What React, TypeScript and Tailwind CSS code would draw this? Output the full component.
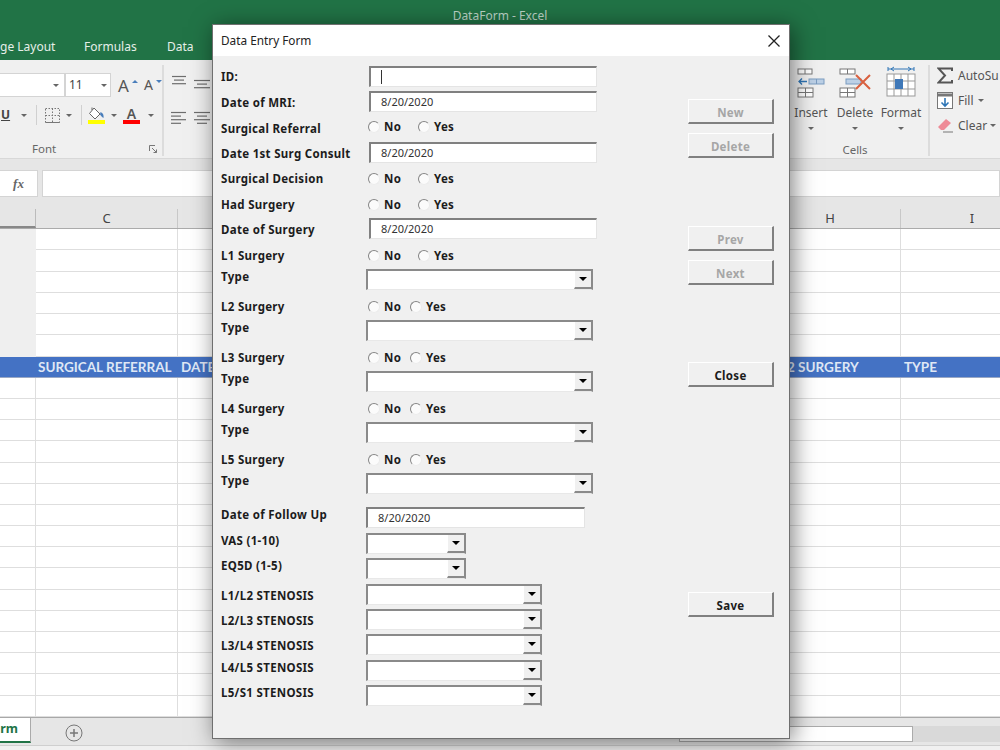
import React from 'react';

const FORM_FONT = "font-['Noto_Sans','DejaVu_Sans',sans-serif]";

const Arrow = ({ className = '' }: { className?: string }) => (
    <span className={`inline-block w-0 h-0 border-x-[3px] border-x-transparent border-t-[3px] border-t-[#666] ${className}`} />
);

const Label = ({ children, className = '' }: { children: React.ReactNode; className?: string }) => (
    <div className={`w-[145px] shrink-0 h-[15px] pt-[1px] leading-[14px] text-[11.5px] tracking-[0.3px] font-bold text-[#1c1c1c] whitespace-nowrap ${className}`}>{children}</div>
);

const DateField = ({ value, className = '' }: { value?: string; className?: string }) => (
    <div className={`h-[21px] bg-white border-t-2 border-l-2 border-[#808080] border-r border-b border-r-[#e4e4e4] border-b-[#e4e4e4] flex items-center pl-[10px] text-[11px] text-[#333] ${className}`}>
        {value ?? <span className="w-px h-[14px] bg-[#333]" />}
    </div>
);

const Combo = ({ className = '' }: { className?: string }) => (
    <div className={`h-[21px] bg-white border-t-2 border-l-2 border-[#8a8a8a] border-r-2 border-b border-b-[#e8e8e8] flex justify-end ${className}`}>
        <div className="w-[17px] h-[18px] bg-[#f0f0f0] border-l border-l-white border-b-2 border-b-[#8a8a8a] flex items-center justify-center">
            <span className="w-0 h-0 border-x-[4px] border-x-transparent border-t-[4px] border-t-black" />
        </div>
    </div>
);

const Radio = ({ text, className = '' }: { text: string; className?: string }) => (
    <div className={`flex items-center h-[14px] gap-[4px] text-[11.5px] tracking-[0.3px] font-bold text-[#1c1c1c] ${className}`}>
        <span className="w-[12px] h-[12px] rounded-full bg-[#fbfbfb] border border-t-[#868686] border-l-[#868686] border-r-[#ececec] border-b-[#ececec]" />
        {text}
    </div>
);

const Radios = ({ narrow, className = '' }: { narrow?: boolean; className?: string }) => (
    <div className={`flex ml-[2px] ${className}`}>
        <Radio text="No" className={narrow ? 'w-[42px]' : 'w-[50px]'} />
        <Radio text="Yes" />
    </div>
);

const FormButton = ({ text, disabled, className = '' }: { text: string; disabled?: boolean; className?: string }) => (
    <div className={`w-[86px] h-[25px] pt-[3px] bg-[#f0f0f0] border-t border-l border-white border-r-2 border-b-2 border-r-[#808080] border-b-[#808080] flex items-center justify-center text-[11.5px] tracking-[0.3px] font-bold ${disabled ? 'text-[#a6a6a6]' : 'text-[#1c1c1c]'} ${className}`}>
        {text}
    </div>
);

function Dialog() {
    return (
        <div className={`absolute left-[212px] top-[24px] w-[578px] h-[715px] bg-[#f0f0f0] border border-[#6f6f6f] shadow-[3px_3px_22px_rgba(0,0,0,0.5)] ${FORM_FONT}`}>
            <div className="h-[31px] bg-white flex items-center justify-between pl-[8px] pr-[9px]">
                <span className="text-[11.8px] text-[#222]">Data Entry Form</span>
                <svg width="12" height="12" viewBox="0 0 12 12" className="stroke-[#222]">
                    <path d="M0.5 0.5L11.5 11.5M11.5 0.5L0.5 11.5" strokeWidth="1.3" />
                </svg>
            </div>
            <div className="flex pl-[8px]">
                <div className="w-[467px] pt-[10px]">
                    <div className="flex h-[25px]"><Label className="mt-[3px]">ID:</Label><DateField className="ml-[3px] w-[228px]" /></div>
                    <div className="flex h-[26px]"><Label className="mt-[4px]">Date of MRI:</Label><DateField value="8/20/2020" className="ml-[3px] w-[228px]" /></div>
                    <div className="flex h-[25px]"><Label className="mt-[4px]">Surgical Referral</Label><Radios className="mt-[3px]" /></div>
                    <div className="flex h-[26px]"><Label className="mt-[4px]">Date 1st Surg Consult</Label><DateField value="8/20/2020" className="ml-[3px] w-[228px]" /></div>
                    <div className="flex h-[25px]"><Label className="mt-[3px]">Surgical Decision</Label><Radios className="mt-[4px]" /></div>
                    <div className="flex h-[25px]"><Label className="mt-[4px]">Had Surgery</Label><Radios className="mt-[5px]" /></div>
                    <div className="flex h-[26px]"><Label className="mt-[4px]">Date of Surgery</Label><DateField value="8/20/2020" className="ml-[3px] w-[228px]" /></div>
                    <div className="flex h-[25px]"><Label className="mt-[4px]">L1 Surgery</Label><Radios className="mt-[5px]" /></div>
                    <div className="flex h-[26px]"><Label>Type</Label><Combo className="w-[227px]" /></div>
                    <div className="flex h-[25px]"><Label className="mt-[4px]">L2 Surgery</Label><Radios narrow className="mt-[5px]" /></div>
                    <div className="flex h-[26px]"><Label>Type</Label><Combo className="w-[227px]" /></div>
                    <div className="flex h-[25px]"><Label className="mt-[4px]">L3 Surgery</Label><Radios narrow className="mt-[5px]" /></div>
                    <div className="flex h-[26px]"><Label>Type</Label><Combo className="w-[227px]" /></div>
                    <div className="flex h-[25px]"><Label className="mt-[4px]">L4 Surgery</Label><Radios narrow className="mt-[5px]" /></div>
                    <div className="flex h-[26px]"><Label>Type</Label><Combo className="w-[227px]" /></div>
                    <div className="flex h-[25px]"><Label className="mt-[4px]">L5 Surgery</Label><Radios narrow className="mt-[5px]" /></div>
                    <div className="flex h-[34px]"><Label>Type</Label><Combo className="w-[227px]" /></div>
                    <div className="flex h-[26px]"><Label>Date of Follow Up</Label><DateField value="8/20/2020" className="w-[219px]" /></div>
                    <div className="flex h-[25px]"><Label>VAS (1-10)</Label><Combo className="w-[100px]" /></div>
                    <div className="flex h-[26px]"><Label>EQ5D (1-5)</Label><Combo className="w-[100px]" /></div>
                    <div className="flex h-[25px]"><Label className="mt-[4px]">L1/L2 STENOSIS</Label><Combo className="w-[176px]" /></div>
                    <div className="flex h-[25px]"><Label className="mt-[4px]">L2/L3 STENOSIS</Label><Combo className="w-[176px]" /></div>
                    <div className="flex h-[26px]"><Label className="mt-[4px]">L3/L4 STENOSIS</Label><Combo className="w-[176px]" /></div>
                    <div className="flex h-[25px]"><Label>L4/L5 STENOSIS</Label><Combo className="w-[176px]" /></div>
                    <div className="flex h-[25px]"><Label>L5/S1 STENOSIS</Label><Combo className="w-[176px]" /></div>
                </div>
                <div className="pt-[43px]">
                    <FormButton text="New" disabled />
                    <FormButton text="Delete" disabled className="mt-[9px]" />
                    <FormButton text="Prev" disabled className="mt-[68px]" />
                    <FormButton text="Next" disabled className="mt-[9px]" />
                    <FormButton text="Close" className="mt-[77px]" />
                    <FormButton text="Save" className="mt-[205px]" />
                </div>
            </div>
        </div>
    );
}

const AlignLines = ({ widths }: { widths: number[][] }) => (
    <svg width="18" height="14" viewBox="0 0 18 14" className="stroke-[#6e6e6e]">
        {widths.map(([a, b], i) => (
            <path key={i} d={`M${a} ${1.5 + i * 3.6}H${b}`} strokeWidth="1.2" />
        ))}
    </svg>
);

function RibbonLeft() {
    return (
        <div className="flex">
            <div className="w-[164px] h-[91px] mt-[5px] border-r-2 border-[#dcdcdc] flex flex-col overflow-hidden">
                <div className="flex items-center h-[24px] mt-[8px]">
                    <div className="w-[65px] h-[24px] bg-white border border-[#d4d4d4] border-l-0 flex items-center justify-end pr-[5px]"><Arrow /></div>
                    <div className="w-[46px] h-[24px] bg-white border border-[#d4d4d4] flex items-center justify-between px-[3px] text-[12px] text-[#444]">11<Arrow /></div>
                    <span className="ml-[7px] w-[14px] text-[17px] leading-none text-[#555]">A</span>
                    <span className="w-0 h-0 border-x-[3px] border-x-transparent border-b-[3px] border-b-[#4a7ebb] mb-[8px]" />
                    <span className="ml-[6px] w-[12px] text-[14px] leading-none text-[#555]">A</span>
                    <span className="w-0 h-0 border-x-[3px] border-x-transparent border-t-[3px] border-t-[#4a7ebb] mb-[8px]" />
                </div>
                <div className="flex items-center h-[24px] mt-[8px]">
                    <span className="ml-[1px] w-[11px] text-[12px] font-bold underline leading-none text-[#444]">U</span>
                    <Arrow className="ml-[9px]" />
                    <span className="ml-[9px] w-px h-[20px] bg-[#d0d0d0]" />
                    <svg width="15" height="15" viewBox="0 0 15 15" className="ml-[8px] stroke-[#777] fill-none">
                        <rect x="0.5" y="0.5" width="14" height="14" strokeDasharray="1.5 1.5" />
                        <path d="M7.5 0.5V14.5M0.5 7.5H14.5" strokeDasharray="1.5 1.5" />
                        <path d="M0.5 14.5H14.5" />
                    </svg>
                    <Arrow className="ml-[6px]" />
                    <span className="ml-[9px] w-px h-[20px] bg-[#d0d0d0]" />
                    <div className="ml-[6px] flex flex-col items-center w-[17px]">
                        <svg width="17" height="13" viewBox="0 0 17 13">
                            <path d="M6 1L12 7L7 12L1.5 6.5Z" fill="#fff" stroke="#666" />
                            <path d="M4 3V0.5" stroke="#666" />
                            <path d="M12.5 5c2.5 1 3.5 3 3 6-1.5-1-3-2.5-3.5-3.5Z" fill="#4a7ebb" />
                        </svg>
                        <span className="w-[17px] h-[4px] bg-[#ffff00]" />
                    </div>
                    <Arrow className="ml-[6px]" />
                    <div className="ml-[6px] flex flex-col items-center w-[17px] text-[14px] font-semibold leading-[13px] text-[#555]">
                        A
                        <span className="w-[17px] h-[4px] bg-[#ff0000]" />
                    </div>
                    <Arrow className="ml-[8px]" />
                </div>
                <div className="flex items-center mt-[15px] h-[18px]">
                    <span className="ml-[32px] text-[11.5px] text-[#666]">Font</span>
                    <svg width="8" height="8" viewBox="0 0 8 8" className="ml-[93px] stroke-[#777] fill-none">
                        <path d="M0.5 6V0.5H6M3 3L7.5 7.5M7.5 4.5V7.5H4.5" />
                    </svg>
                </div>
            </div>
            <div className="flex gap-[5px] pl-[6px] w-[48px]">
                <div className="flex flex-col gap-[22px] mt-[15px]">
                    <AlignLines widths={[[2, 16], [4, 14], [2, 16]]} />
                    <AlignLines widths={[[1, 16], [1, 11], [1, 16], [1, 11]]} />
                </div>
                <div className="flex flex-col gap-[18px] mt-[19px]">
                    <AlignLines widths={[[1, 17], [4, 14], [1, 17]]} />
                    <AlignLines widths={[[1, 17], [4, 14], [1, 17], [4, 14]]} />
                </div>
            </div>
        </div>
    );
}

function RibbonRight() {
    return (
        <div className="flex w-[210px] text-[12px] text-[#555]">
            <div className="w-[140px] h-[91px] mt-[5px] border-r-2 border-[#dcdcdc]">
                <div className="flex">
                    <div className="w-[42px] flex flex-col items-center">
                        <div className="h-[36px] pt-[3px]">
                            <svg width="28" height="30" viewBox="0 0 28 30" className="stroke-[#777] fill-white">
                                <rect x="1" y="1" width="14" height="5" />
                                <path d="M8 1V6" />
                                <rect x="12" y="11" width="15" height="5" fill="#bcd0e6" stroke="#7b9cc0" />
                                <path d="M19.5 11V16" stroke="#7b9cc0" />
                                <path d="M10 13.5H2M5 10.5L2 13.5L5 16.5" stroke="#2e75b6" fill="none" strokeWidth="1.3" />
                                <rect x="1" y="20" width="15" height="9" />
                                <path d="M8.5 20V29M1 24.5H16" />
                            </svg>
                        </div>
                        <span className="mt-[4px] leading-[16px]">Insert</span>
                        <Arrow className="mt-[6px]" />
                    </div>
                    <div className="w-[46px] flex flex-col items-center">
                        <div className="h-[36px] pt-[3px]">
                            <svg width="32" height="30" viewBox="0 0 32 30" className="stroke-[#777] fill-white">
                                <rect x="1" y="1" width="15" height="5" />
                                <path d="M8.5 1V6" />
                                <rect x="7" y="11" width="15" height="5" fill="#bcd0e6" stroke="#7b9cc0" />
                                <rect x="1" y="20" width="15" height="9" />
                                <path d="M8.5 20V29M1 24.5H16" />
                                <path d="M17 7L31 21M31 7L17 21" stroke="#d9603f" strokeWidth="2" />
                            </svg>
                        </div>
                        <span className="mt-[4px] leading-[16px]">Delete</span>
                        <Arrow className="mt-[6px]" />
                    </div>
                    <div className="w-[46px] flex flex-col items-center">
                        <div className="h-[36px] pt-[1px]">
                            <svg width="30" height="33" viewBox="0 0 30 33" className="stroke-[#999] fill-white">
                                <path d="M2 3H28M2 1V5M28 1V5M5 3L8 1M5 3L8 5M25 3L22 1M25 3L22 5" stroke="#2e75b6" fill="none" />
                                <rect x="1" y="8" width="28" height="22" />
                                <path d="M8 8V30M15 8V30M22 8V30M1 15H29M1 23H29" />
                                <rect x="9" y="13" width="8" height="10" fill="#3f78b8" stroke="none" />
                            </svg>
                        </div>
                        <span className="mt-[4px] leading-[16px]">Format</span>
                        <Arrow className="mt-[6px]" />
                    </div>
                </div>
                <div className="mt-[11px] text-center text-[11.5px] text-[#666] pr-[8px]">Cells</div>
            </div>
            <div className="pl-[7px] pt-[7px] flex flex-col gap-[8px] whitespace-nowrap overflow-hidden">
                <div className="flex items-center h-[17px] gap-[5px]">
                    <svg width="16" height="17" viewBox="0 0 16 17" className="stroke-[#555] fill-none"><path d="M15 4V1.5H1.5L8 8.5L1.5 15.5H15V13" strokeWidth="2" /></svg>
                    AutoSu
                </div>
                <div className="flex items-center h-[17px] gap-[5px]">
                    <svg width="16" height="17" viewBox="0 0 16 17" className="fill-white stroke-[#777]">
                        <rect x="0.5" y="0.5" width="15" height="16" />
                        <path d="M0.5 3H15.5" strokeWidth="3" />
                        <path d="M8 6V14M4.5 10.5L8 14L11.5 10.5" stroke="#2e75b6" strokeWidth="1.6" fill="none" />
                    </svg>
                    Fill<Arrow className="-ml-[1px]" />
                </div>
                <div className="flex items-center h-[17px] gap-[4px]">
                    <svg width="17" height="15" viewBox="0 0 17 15">
                        <path d="M1 9L9 1L14 5L7 12H4Z" fill="#ee8b97" />
                        <path d="M6 14H16" stroke="#777" />
                    </svg>
                    Clear<Arrow className="-ml-[1px]" />
                </div>
            </div>
        </div>
    );
}

function Excel() {
    const upper = Array.from({ length: 6 });
    const lower = Array.from({ length: 16 });
    return (
        <div className="font-['Noto_Sans',sans-serif]">
            {/* title and tabs */}
            <div className="h-[60px] bg-[#217346] overflow-hidden">
                <div className="h-[32px] flex items-center justify-center text-[12px] text-[#bcd3c6]">DataForm - Excel</div>
                <div className="flex h-[30px] items-center text-[12px] text-[#e6efe9] whitespace-nowrap">
                    <span className="w-[84px] text-right pr-[32px]">ge Layout</span>
                    <span className="w-[83px]">Formulas</span>
                    <span>Data</span>
                </div>
            </div>
            {/* ribbon */}
            <div className="h-[98px] bg-[#f0f0f0] flex justify-between">
                <RibbonLeft />
                <RibbonRight />
            </div>
            {/* formula bar */}
            <div className="h-[50px] bg-[#e6e6e6] border-t border-[#d8d8d8] pt-[11px] flex gap-[4px]">
                <div className="w-[38px] h-[27px] bg-white border border-[#d4d4d4] border-l-0 flex items-center justify-center font-['Liberation_Serif',serif] italic font-bold text-[13px] text-[#666]">fx</div>
                <div className="flex-1 h-[27px] bg-white border border-[#d4d4d4]" />
            </div>
            {/* column headers */}
            <div className="flex h-[21px] pt-[1px] bg-[#e6e6e6] border-b border-[#ababab] text-[13px] text-[#444] overflow-hidden">
                <div className="w-[36px] shrink-0 border-b-2 border-[#888] border-r border-r-[#bbb]" />
                <div className="w-[142px] shrink-0 border-r border-[#c8c8c8] flex items-center justify-center">C</div>
                <div className="w-[582px] shrink-0" />
                <div className="w-[141px] shrink-0 border-r border-[#c8c8c8] flex items-center justify-center">H</div>
                <div className="w-[142px] shrink-0 flex items-center justify-center">I</div>
            </div>
            {/* sheet */}
            {upper.map((_, i) => (
                <div key={i} className="flex h-[21.3px] bg-white">
                    <div className="w-[36px] bg-[#efefef]" />
                    <div className="w-[142px] border-r border-b border-[#dedede]" />
                    <div className="w-[723px] border-r border-b border-[#dedede]" />
                    <div className="flex-1 border-b border-[#dedede]" />
                </div>
            ))}
            <div className="flex h-[21px] pt-[1px] bg-[#4472c4] border-b border-[#9aa8c4] font-['Lato',sans-serif] font-bold text-[13.5px] text-[#dfe7f5] items-center whitespace-nowrap">
                <div className="w-[36px]" />
                <div className="w-[142px] pl-[2px]">SURGICAL REFERRAL</div>
                <div className="w-[582px] pl-[3px]">DATE</div>
                <div className="w-[141px] pl-[20px]">L2 SURGERY</div>
                <div className="flex-1 pl-[3px]">TYPE</div>
            </div>
            {lower.map((_, i) => (
                <div key={i} className="flex h-[21.2px] bg-white">
                    <div className="w-[36px] border-r border-b border-[#dedede]" />
                    <div className="w-[142px] border-r border-b border-[#dedede]" />
                    <div className="w-[723px] border-r border-b border-[#dedede]" />
                    <div className="flex-1 border-b border-[#dedede]" />
                </div>
            ))}
            {/* sheet tabs */}
            <div className="h-[28px] bg-[#e6e6e6] border-t border-[#a8a8a8] flex">
                <div className="w-[31px] h-[25px] bg-white border-r border-[#aaa] border-b-2 border-b-[#217346] flex justify-end items-center pr-[12px] text-[12.5px] font-bold text-[#217346]">
                    <span className="whitespace-nowrap">rm</span>
                </div>
                <svg width="18" height="18" viewBox="0 0 18 18" className="ml-[34px] mt-[6px] stroke-[#777] fill-none">
                    <circle cx="9" cy="9" r="8" />
                    <path d="M9 5V13M5 9H13" strokeWidth="1.5" />
                </svg>
                <div className="ml-[596px] mt-[8px] w-[234px] h-[16px] bg-white border border-[#ababab]" />
                <div className="flex-1 mt-[8px] h-[16px] bg-[#d9d9d9]" />
            </div>
            <div className="h-[5px] bg-[#f0f0f0] border-t border-[#cfcfcf]" />
        </div>
    );
}

export default function App() {
    return (
        <div className="relative w-[1000px] h-[750px] overflow-hidden">
            <Excel />
            <Dialog />
        </div>
    );
}
